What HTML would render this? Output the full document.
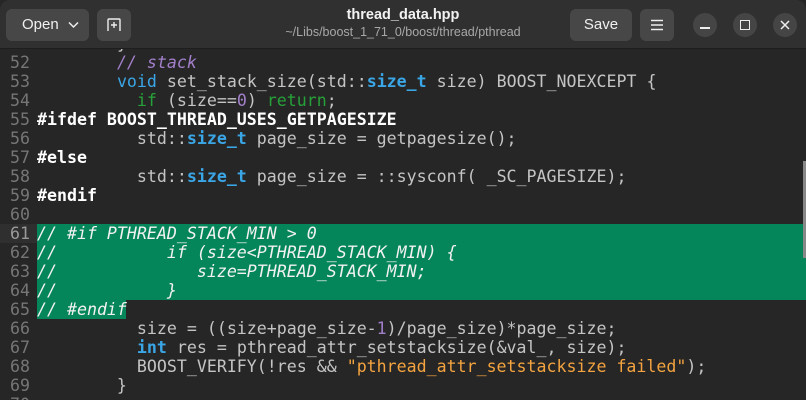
<!DOCTYPE html>
<html><head><meta charset="utf-8"><style>
html,body{margin:0;width:806px;height:400px;overflow:hidden}
body{background:#262626;font-family:"Liberation Sans",sans-serif;position:relative}
.hdr{position:absolute;left:0;top:0;width:806px;height:48px;background:#303030;border-bottom:1px solid #1e1e1e;z-index:2;border-radius:10px 10px 0 0}
.btn{position:absolute;top:9px;height:32px;background:#474747;border-radius:6px;color:#f0f0f0;font-size:15px;line-height:32px;text-align:center}
.circ{position:absolute;top:13px;width:24px;height:24px;border-radius:50%;background:#454545}
.code{position:absolute;left:0;top:34px;width:806px;height:366px;overflow:hidden;font-family:"DejaVu Sans Mono","Liberation Mono",monospace;font-size:16.6px}
.l{height:19px;line-height:19px;white-space:pre;position:relative;color:#c4c4c4}
.n{position:absolute;left:0;width:30px;text-align:right;color:#767676}
.t{position:absolute;left:37px}
.hl{position:absolute;left:37px;top:224px;width:769px;height:76px;background:#05865a}
.c{color:#a27fc9;font-style:italic}
.hc{color:#f2f2f2;font-style:italic}
.k{color:#3aa6e6}
.kb{color:#3aa6e6;font-weight:bold}
.g{color:#26a139}
.p{color:#fff;font-weight:bold}
.num{color:#a27fc9}
.s{color:#f3a33f}
</style></head><body>
<div class="hl"></div>
<div style="position:absolute;left:37px;top:300px;width:89px;height:19px;background:#05865a"></div>
<div style="position:absolute;left:0;top:224px;width:37px;height:19px;background:#2f2f2f"></div>
<div style="position:absolute;left:803px;top:161px;width:3px;height:97px;background:#888;z-index:1"></div>
<div class="code">
<div class="l"><span class="n">51</span><span class="t">        }</span></div>
<div class="l"><span class="n">52</span><span class="t">        <span class="c">// stack</span></span></div>
<div class="l"><span class="n">53</span><span class="t">        <span class="k">void</span> set_stack_size(std::<span class="kb">size_t</span> size) BOOST_NOEXCEPT {</span></div>
<div class="l"><span class="n">54</span><span class="t">          <span class="g">if</span> (size==<span class="num">0</span>) <span class="g">return</span>;</span></div>
<div class="l"><span class="n">55</span><span class="t"><span class="p">#ifdef BOOST_THREAD_USES_GETPAGESIZE</span></span></div>
<div class="l"><span class="n">56</span><span class="t">          std::<span class="kb">size_t</span> page_size = getpagesize();</span></div>
<div class="l"><span class="n">57</span><span class="t"><span class="p">#else</span></span></div>
<div class="l"><span class="n">58</span><span class="t">          std::<span class="kb">size_t</span> page_size = ::sysconf( _SC_PAGESIZE);</span></div>
<div class="l"><span class="n">59</span><span class="t"><span class="p">#endif</span></span></div>
<div class="l"><span class="n">60</span><span class="t"></span></div>
<div class="l"><span class="n" style="color:#9a9a9a">61</span><span class="t hc">// #if PTHREAD_STACK_MIN &gt; 0</span></div>
<div class="l"><span class="n">62</span><span class="t hc">//           if (size&lt;PTHREAD_STACK_MIN) {</span></div>
<div class="l"><span class="n">63</span><span class="t hc">//              size=PTHREAD_STACK_MIN;</span></div>
<div class="l"><span class="n">64</span><span class="t hc">//           }</span></div>
<div class="l"><span class="n">65</span><span class="t hc">// #endif</span></div>
<div class="l"><span class="n">66</span><span class="t">          size = ((size+page_size-<span class="num">1</span>)/page_size)*page_size;</span></div>
<div class="l"><span class="n">67</span><span class="t">          <span class="kb">int</span> res = pthread_attr_setstacksize(&amp;val_, size);</span></div>
<div class="l"><span class="n">68</span><span class="t">          BOOST_VERIFY(!res &amp;&amp; <span class="s">"pthread_attr_setstacksize failed"</span>);</span></div>
<div class="l"><span class="n">69</span><span class="t">        }</span></div>
<div class="l"><span class="n">70</span><span class="t"></span></div>
</div>
<div class="hdr">
<div class="btn" style="left:6px;width:83px;text-align:left"><span style="padding-left:16px">Open</span><svg style="position:absolute;left:62px;top:12px" width="11" height="8" viewBox="0 0 11 8"><path d="M1 1.5L5.5 6 10 1.5" stroke="#eee" stroke-width="1.5" fill="none"/></svg></div>
<div class="btn" style="left:97px;width:34px"><svg style="position:absolute;left:10px;top:9px" width="14" height="14" viewBox="0 0 14 14"><path d="M1 13V2a1 1 0 0 1 1-1h10a1 1 0 0 1 1 1v11M7 4v6M4 7h6" stroke="#eee" stroke-width="1.4" fill="none"/></svg></div>
<div style="position:absolute;left:0;width:806px;top:7px;text-align:center;color:#f2f2f2;font-weight:bold;font-size:14.5px">thread_data.hpp</div>
<div style="position:absolute;left:0;width:806px;top:25px;text-align:center;color:#a8a8a8;font-size:12.5px">~/Libs/boost_1_71_0/boost/thread/pthread</div>
<div class="btn" style="left:570px;width:62px">Save</div>
<div class="btn" style="left:640px;width:34px"><svg style="position:absolute;left:10px;top:10px" width="14" height="12" viewBox="0 0 14 12"><path d="M1 1.5h12M1 6h12M1 10.5h12" stroke="#eee" stroke-width="1.4"/></svg></div>
<div class="circ" style="left:693px"><div style="position:absolute;left:7px;top:14px;width:10px;height:1.5px;background:#eee"></div></div>
<div class="circ" style="left:733px"><div style="position:absolute;left:7px;top:7px;width:8px;height:8px;border:1.5px solid #eee"></div></div>
<div class="circ" style="left:773px"><svg style="position:absolute;left:7px;top:7px" width="10" height="10" viewBox="0 0 10 10"><path d="M1 1L9 9M9 1L1 9" stroke="#eee" stroke-width="1.5"/></svg></div>
</div>
</body></html>
